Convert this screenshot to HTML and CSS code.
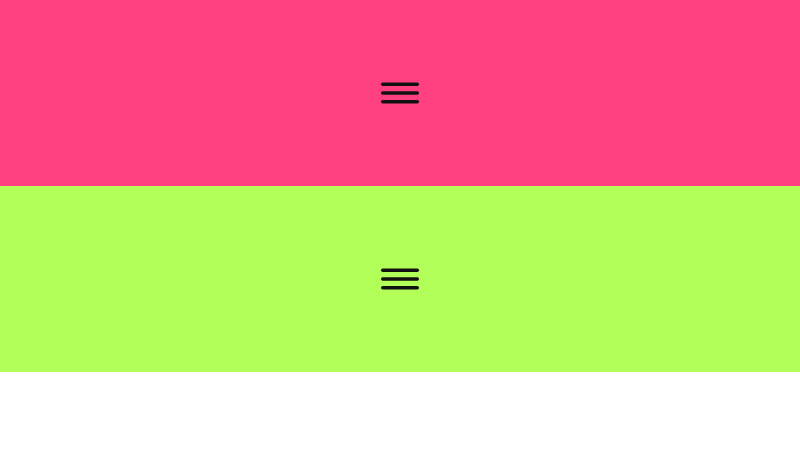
FILE: index.html
```html
<!DOCTYPE html>
<html>
<head>
<meta charset="utf-8">
<link rel="stylesheet" href="styles.css">
</head>
<body>
<section class="band band-pink">
  <button class="menu-btn" aria-label="Menu">
    <svg width="40" height="24" viewBox="0 0 40 24"><g stroke="#111" stroke-width="3.4" stroke-linecap="round"><line x1="2.7" y1="3.25" x2="37.3" y2="3.25"/><line x1="2.7" y1="12" x2="37.3" y2="12"/><line x1="2.7" y1="20.75" x2="37.3" y2="20.75"/></g></svg>
  </button>
</section>
<section class="band band-green">
  <button class="menu-btn" aria-label="Menu">
    <svg width="40" height="24" viewBox="0 0 40 24"><g stroke="#111" stroke-width="3.4" stroke-linecap="round"><line x1="2.7" y1="3.25" x2="37.3" y2="3.25"/><line x1="2.7" y1="12" x2="37.3" y2="12"/><line x1="2.7" y1="20.75" x2="37.3" y2="20.75"/></g></svg>
  </button>
</section>
</body>
</html>
```
FILE: styles.css
```css
html, body { margin: 0; padding: 0; background: #fff; }
.band {
  height: 186px;
  display: flex;
  align-items: center;
  justify-content: center;
}
.band-pink { background: #ff4081; }
.band-green { background: #b2ff59; }
.menu-btn {
  border: 0;
  background: none;
  padding: 0;
  display: block;
  line-height: 0;
  cursor: pointer;
}
.menu-btn svg { display: block; }
```
